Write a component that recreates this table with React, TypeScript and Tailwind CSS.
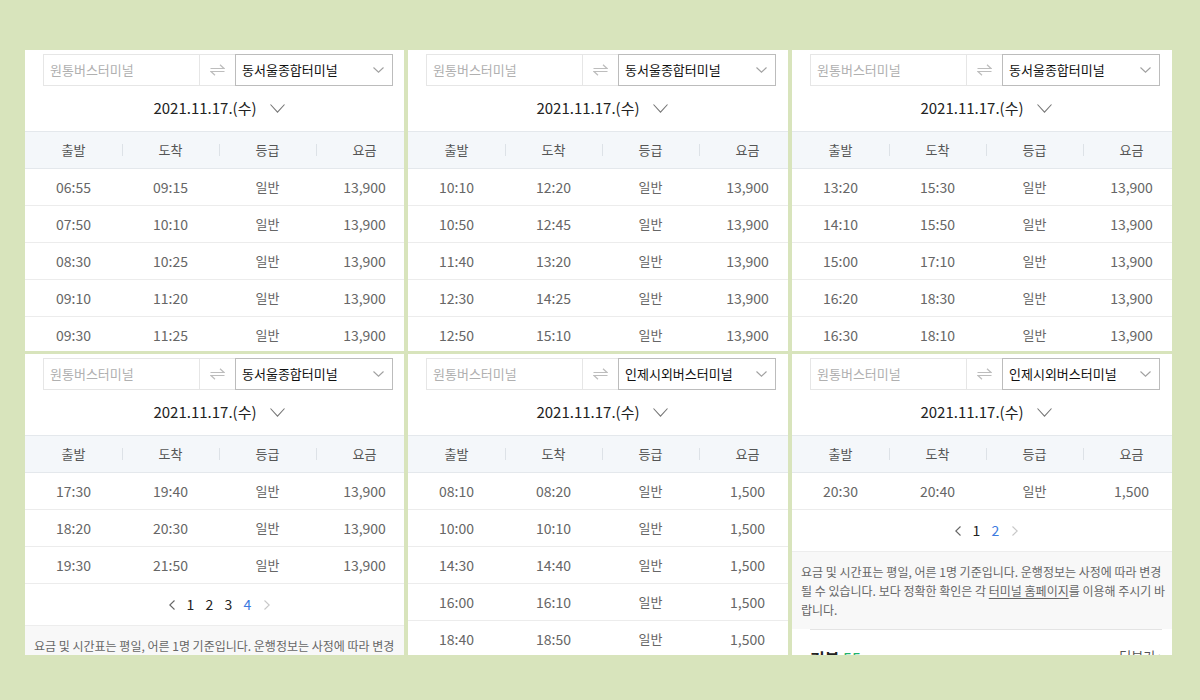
import React from "react";

type Row = [string, string];

const PANELS: { to: string; fare: string; rows: Row[]; pages?: number[]; current?: number; notice?: boolean; more?: boolean }[] = [
  { to: "동서울종합터미널", fare: "13,900", rows: [["06:55", "09:15"], ["07:50", "10:10"], ["08:30", "10:25"], ["09:10", "11:20"], ["09:30", "11:25"]] },
  { to: "동서울종합터미널", fare: "13,900", rows: [["10:10", "12:20"], ["10:50", "12:45"], ["11:40", "13:20"], ["12:30", "14:25"], ["12:50", "15:10"]] },
  { to: "동서울종합터미널", fare: "13,900", rows: [["13:20", "15:30"], ["14:10", "15:50"], ["15:00", "17:10"], ["16:20", "18:30"], ["16:30", "18:10"]] },
  { to: "동서울종합터미널", fare: "13,900", rows: [["17:30", "19:40"], ["18:20", "20:30"], ["19:30", "21:50"]], pages: [1, 2, 3, 4], current: 4, notice: true },
  { to: "인제시외버스터미널", fare: "1,500", rows: [["08:10", "08:20"], ["10:00", "10:10"], ["14:30", "14:40"], ["16:00", "16:10"], ["18:40", "18:50"]] },
  { to: "인제시외버스터미널", fare: "1,500", rows: [["20:30", "20:40"]], pages: [1, 2], current: 2, notice: true, more: true },
];

const HEAD = ["출발", "도착", "등급", "요금"];

function Chevron({ w, h, color, sw = 1.1 }: { w: number; h: number; color: string; sw?: number }) {
  return (
    <svg width={w} height={h} viewBox={`0 0 ${w} ${h}`} fill="none">
      <polyline points={`0.5,0.5 ${w / 2},${h - 0.8} ${w - 0.5},0.5`} stroke={color} strokeWidth={sw} />
    </svg>
  );
}

function Swap() {
  return (
    <svg width="15" height="12" viewBox="0 0 15 12" fill="none" stroke="#bdbdbd" strokeWidth="1.2">
      <path d="M0.5 4.5H14L10 0.8" />
      <path d="M14.5 7.5H1L5 11.2" />
    </svg>
  );
}

function Panel({ p }: { p: (typeof PANELS)[number] }) {
  return (
    <div className="overflow-hidden bg-white">
      <div className="w-[388px]">
        <div className="px-[18px] pt-[4px]">
          <div className="flex h-[32px] w-[350px] text-[13px]">
            <div className="flex w-[157px] items-center border border-[#e6e6e6] pl-[6px] text-[#b0b0b0]">원통버스터미널</div>
            <div className="flex w-[35px] items-center justify-center border-y border-[#e6e6e6]"><Swap /></div>
            <div className="flex w-[158px] items-center justify-between border border-[#bcbcbc] pl-[6px] pr-[8px] text-[#111]">
              {p.to}
              <Chevron w={11} h={6} color="#a0a0a0" />
            </div>
          </div>
          <div className="flex h-[45px] items-center justify-center gap-[13px]">
            <span className="text-[15px] text-[#222]">2021.11.17.(수)</span>
            <Chevron w={15} h={9} color="#777" />
          </div>
        </div>
        <div className="grid h-[38px] grid-cols-4 items-center border-y border-[#e4e8ec] bg-[#f4f7fa] text-[13px] text-[#555]">
          {HEAD.map((h, i) => (
            <div key={h} className="relative text-center">
              {i > 0 && <span className="absolute left-0 top-1/2 h-[12px] w-px -translate-y-1/2 bg-[#dde2e7]" />}
              {h}
            </div>
          ))}
        </div>
        {p.rows.map(([a, b]) => (
          <div key={a} className="grid h-[37px] grid-cols-4 items-center border-b border-[#ececec] text-center text-[14px] text-[#666]">
            <span>{a}</span>
            <span>{b}</span>
            <span className="text-[13px]">일반</span>
            <span>{p.fare}</span>
          </div>
        ))}
        {p.pages && (
          <div className="flex h-[41px] items-center justify-center text-[14px] text-[#222]">
            <span className="flex w-[19px] justify-center"><svg width="6" height="10" viewBox="0 0 6 10" fill="none"><polyline points="5.5,0.5 0.8,5 5.5,9.5" stroke="#666" strokeWidth="1.1" /></svg></span>
            {p.pages.map(n => (
              <span key={n} className={n === p.current ? "w-[19px] text-center text-[#3b7be0]" : "w-[19px] text-center"}>{n}</span>
            ))}
            <span className="flex w-[19px] justify-center"><svg width="6" height="10" viewBox="0 0 6 10" fill="none"><polyline points="0.5,0.5 5.2,5 0.5,9.5" stroke="#c8c8c8" strokeWidth="1.1" /></svg></span>
          </div>
        )}
        {p.notice && (
          <div className="whitespace-nowrap border-t border-[#ededed] bg-[#f8f8f8] py-[10px] pl-[9px] text-[12px] leading-[19px] text-[#666]">
            요금 및 시간표는 평일, 어른 1명 기준입니다. 운행정보는 사정에 따라 변경<br />
            될 수 있습니다. 보다 정확한 확인은 각 <span className="underline underline-offset-2">터미널 홈페이지</span>를 이용해 주시기 바<br />
            랍니다.
          </div>
        )}
        {p.more && (
          <div className="mx-[18px] flex items-start justify-between border-t border-[#e4e4e4] pt-[16px]">
            <span className="text-[16px] font-bold text-[#222]">기부 <span className="font-normal text-[#1fb36b]">55</span></span>
            <span className="text-[13px] text-[#555]">더보기 ›</span>
          </div>
        )}
      </div>
    </div>
  );
}

export default function App() {
  return (
    <div className="h-[700px] w-full overflow-hidden bg-[#d8e4bc]" style={{ fontFamily: '"Noto Sans CJK KR", "Noto Sans", sans-serif' }}>
      <div className="grid grid-cols-[379px_380px_380px] grid-rows-[301px_301px] gap-x-[4px] gap-y-[3px] pl-[25px] pt-[50px]">
        {PANELS.map((p, i) => <Panel key={i} p={p} />)}
      </div>
    </div>
  );
}
